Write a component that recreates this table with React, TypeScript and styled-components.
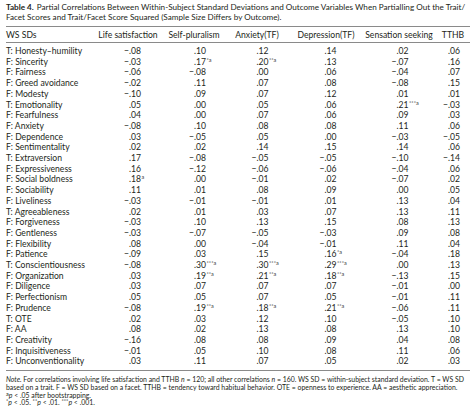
import styled, { createGlobalStyle } from "styled-components";

const GlobalStyle = createGlobalStyle`
  html, body {
    margin: 0;
    padding: 0;
    background: #ffffff;
  }
  body {
    font-family: Lato, "Open Sans", "Liberation Sans", sans-serif;
    color: #231f20;
  }
`;

const Page = styled.div`
  width: 474px;
  height: 413px;
  box-sizing: border-box;
  padding: 2px 4px 0 6px;
  overflow: hidden;
`;

const Caption = styled.p`
  margin: 0 0 4px;
  font-size: 8.15px;
  line-height: 10px;
  white-space: nowrap;
`;

const CaptionLabel = styled.b`
  font-weight: 700;
  margin-right: 3px;
`;

const Table = styled.table`
  width: 100%;
  border-collapse: collapse;
  font-size: 8.6px;
  border-top: 1px solid #8a8a8a;
  border-bottom: 1px solid #8a8a8a;
`;

const HeadRow = styled.tr`
  height: 16px;
  border-bottom: 1px solid #8a8a8a;
`;

const HeadCell = styled.th<{ $first?: boolean; $w: number }>`
  font-weight: 400;
  padding: 1px 0 0;
  width: ${({ $w }) => $w}px;
  text-align: ${({ $first }) => ($first ? "left" : "center")};
  white-space: nowrap;
`;

const BodyRow = styled.tr<{ $top?: boolean; $last?: boolean }>`
  height: 10.7px;
  line-height: 10.7px;
  td {
    padding-top: ${({ $top }) => ($top ? "3px" : "0")};
    padding-bottom: ${({ $last }) => ($last ? "3px" : "0")};
  }
`;

const LabelCell = styled.td`
  padding: 0;
  white-space: nowrap;
`;

const ValueCell = styled.td`
  padding: 0;
  text-align: center;
  white-space: nowrap;
`;

const Value = styled.span<{ $shift: number }>`
  position: relative;
  display: inline-block;
  width: 22px;
  text-align: right;
  margin-left: ${({ $shift }) => $shift}px;
`;

const Mark = styled.span`
  position: absolute;
  left: 100%;
  top: 1px;
  font-size: 5.5px;
  line-height: 1;
  white-space: nowrap;
  margin-left: 0.5px;
  color: #444;
`;

const Notes = styled.div`
  margin-top: 5px;
  font-size: 6.9px;
  line-height: 7.7px;
`;

const NoteLine = styled.p`
  margin: 0;
  white-space: nowrap;
`;

const Sup = styled.sup`
  font-size: 5.5px;
  vertical-align: 2px;
  line-height: 0;
`;

const columns = [
  { title: "WS SDs", width: 86 },
  { title: "Life satisfaction", width: 72, shift: 4 },
  { title: "Self-pluralism", width: 60, shift: 2 },
  { title: "Anxiety(TF)", width: 66, shift: 1 },
  { title: "Depression(TF)", width: 72, shift: -1 },
  { title: "Sensation seeking", width: 74, shift: -3 },
  { title: "TTHB", width: 34, shift: -8 },
];

const rows: [string, ...string[]][] = [
  ["T: Honesty–humility", "−.08", ".10", ".12", ".14", ".02", ".06"],
  ["F: Sincerity", "−.03", ".17*a", ".20**a", ".13", "−.07", ".16"],
  ["F: Fairness", "−.06", "−.08", ".00", ".06", "−.04", ".07"],
  ["F: Greed avoidance", "−.02", ".11", ".07", ".08", "−.08", ".15"],
  ["F: Modesty", "−.10", ".09", ".07", ".12", ".01", ".01"],
  ["T: Emotionality", ".05", ".00", ".05", ".06", ".21***a", "−.03"],
  ["F: Fearfulness", ".04", ".00", ".07", ".06", ".09", ".03"],
  ["F: Anxiety", "−.08", ".10", ".08", ".08", ".11", ".06"],
  ["F: Dependence", ".03", "−.05", ".05", ".00", "−.03", "−.05"],
  ["F: Sentimentality", ".02", ".02", ".14", ".15", ".14", ".06"],
  ["T: Extraversion", ".17", "−.08", "−.05", "−.05", "−.10", "−.14"],
  ["F: Expressiveness", ".16", "−.12", "−.06", "−.06", "−.04", ".06"],
  ["F: Social boldness", ".18a", ".00", "−.01", ".02", "−.07", ".02"],
  ["F: Sociability", ".11", ".01", ".08", ".09", ".00", ".05"],
  ["F: Liveliness", "−.03", "−.01", "−.01", ".01", ".13", ".04"],
  ["T: Agreeableness", ".02", ".01", ".03", ".07", ".13", ".11"],
  ["F: Forgiveness", "−.03", ".10", ".13", ".15", ".08", ".13"],
  ["F: Gentleness", "−.03", "−.07", "−.05", "−.03", ".09", ".08"],
  ["F: Flexibility", ".08", ".00", "−.04", "−.01", ".11", ".04"],
  ["F: Patience", "−.09", ".03", ".15", ".16*a", "−.04", ".18"],
  ["T: Conscientiousness", "−.08", ".30***a", ".30***a", ".29***a", ".00", ".13"],
  ["F: Organization", ".03", ".19**a", ".21**a", ".18**a", "−.13", ".15"],
  ["F: Diligence", ".03", ".07", ".07", ".07", "−.01", ".00"],
  ["F: Perfectionism", ".05", ".05", ".07", ".05", "−.01", ".11"],
  ["F: Prudence", "−.08", ".19**a", ".18**a", ".21**a", "−.06", ".11"],
  ["T: OTE", ".02", ".03", ".12", ".10", "−.05", ".10"],
  ["F: AA", ".08", ".02", ".13", ".08", ".13", ".10"],
  ["F: Creativity", "−.16", ".08", ".08", ".09", ".04", ".08"],
  ["F: Inquisitiveness", "−.01", ".05", ".10", ".08", ".11", ".06"],
  ["F: Unconventionality", ".03", ".11", ".07", ".05", ".02", ".03"],
];

const splitValue = (raw: string) => {
  const match = raw.match(/^([−.\d]+)(.*)$/);
  return match ? { num: match[1], mark: match[2] } : { num: raw, mark: "" };
};

const App = () => {
  return (
    <Page>
      <GlobalStyle />
      <Caption>
        <CaptionLabel>Table 4.</CaptionLabel>
        Partial Correlations Between Within-Subject Standard Deviations and Outcome Variables When Partialling Out the Trait/
        <br />
        Facet Scores and Trait/Facet Score Squared (Sample Size Differs by Outcome).
      </Caption>
      <Table>
        <thead>
          <HeadRow>
            {columns.map((col, i) => (
              <HeadCell key={col.title} $first={i === 0} $w={col.width}>
                {col.title}
              </HeadCell>
            ))}
          </HeadRow>
        </thead>
        <tbody>
          {rows.map(([label, ...values], r) => (
            <BodyRow key={label} $top={r === 0} $last={r === rows.length - 1}>
              <LabelCell>{label}</LabelCell>
              {values.map((raw, c) => {
                const { num, mark } = splitValue(raw);
                return (
                  <ValueCell key={c}>
                    <Value $shift={columns[c + 1].shift ?? 0}>
                      {num}
                      {mark && <Mark>{mark}</Mark>}
                    </Value>
                  </ValueCell>
                );
              })}
            </BodyRow>
          ))}
        </tbody>
      </Table>
      <Notes>
        <NoteLine>
          <i>Note.</i> For correlations involving life satisfaction and TTHB <i>n</i> = 120; all other correlations <i>n</i> = 160. WS SD = within-subject standard deviation. T = WS SD
        </NoteLine>
        <NoteLine>
          based on a trait. F = WS SD based on a facet. TTHB = tendency toward habitual behavior. OTE = openness to experience. AA = aesthetic appreciation.
        </NoteLine>
        <NoteLine>
          <Sup>a</Sup>
          <i>p</i> &lt; .05 after bootstrapping.
        </NoteLine>
        <NoteLine>
          <Sup>*</Sup>
          <i>p</i> &lt; .05. <Sup>**</Sup>
          <i>p</i> &lt; .01. <Sup>***</Sup>
          <i>p</i> &lt; .001.
        </NoteLine>
      </Notes>
    </Page>
  );
};

export default App;
